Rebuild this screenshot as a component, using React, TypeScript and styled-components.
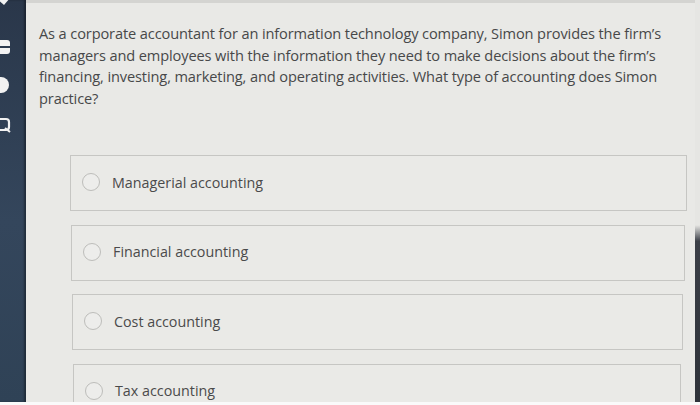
import React from 'react';
import styled, { createGlobalStyle } from 'styled-components';

const GlobalStyle = createGlobalStyle`
  html, body {
    margin: 0;
    padding: 0;
    background: #e8e8e5;
  }
  body {
    font-family: "Open Sans", "Noto Sans", Arial, sans-serif;
  }
`;

const questionLines = [
  'As a corporate accountant for an information technology company, Simon provides the firm’s',
  'managers and employees with the information they need to make decisions about the firm’s',
  'financing, investing, marketing, and operating activities. What type of accounting does Simon',
  'practice?',
];

const options = [
  'Managerial accounting',
  'Financial accounting',
  'Cost accounting',
  'Tax accounting',
];

const App: React.FC = () => {
  return (
    <>
      <GlobalStyle />
      <Screen>
        <Sidebar>
          <SideIcon $top={-6}>
            <svg width="14" height="14" viewBox="0 0 14 14">
              <path d="M-4 2 L10 2 L4 9 Z" fill="#f2f2f2" />
            </svg>
          </SideIcon>
          <SideIcon $top={26}>
            <svg width="14" height="18" viewBox="0 0 14 18">
              <rect x="-6" y="2" width="16" height="14" rx="3" fill="#f2f2f2" />
              <rect x="-6" y="8" width="16" height="2" fill="#2c3b4f" />
            </svg>
          </SideIcon>
          <SideIcon $top={20}>
            <svg width="14" height="18" viewBox="0 0 14 18">
              <circle cx="1" cy="9" r="8" fill="#f2f2f2" />
            </svg>
          </SideIcon>
          <SideIcon $top={22}>
            <svg width="14" height="16" viewBox="0 0 14 16">
              <path d="M-4 2 L6 2 Q9 2 9 5 L9 10 Q9 13 6 13 L2 13 L-4 13" fill="none" stroke="#f2f2f2" strokeWidth="2.2" />
              <path d="M5 11 L10 15" stroke="#f2f2f2" strokeWidth="2" />
            </svg>
          </SideIcon>
        </Sidebar>
        <Main>
          <Question>
            {questionLines.map(line => (
              <QuestionLine key={line}>{line}</QuestionLine>
            ))}
          </Question>
          <OptionList>
            {options.map((label, i) => (
              <Option key={label} $shift={i}>
                <Radio />
                <OptionLabel>{label}</OptionLabel>
              </Option>
            ))}
          </OptionList>
        </Main>
        <RightEdge />
      </Screen>
      <BottomStrip />
    </>
  );
};

export default App;

// Styled Components
const Screen = styled.div`
  display: flex;
  width: 700px;
  height: 402px;
  overflow: hidden;
  background: #e8e8e5;
`;

const Sidebar = styled.div`
  width: 26px;
  flex-shrink: 0;
  background: linear-gradient(to bottom, #2a374a 0%, #34465c 55%, #2f4256 100%);
  display: flex;
  flex-direction: column;
  align-items: flex-start;
  overflow: hidden;
  box-shadow: inset -2px 0 2px rgba(0, 0, 0, 0.35);
`;

const SideIcon = styled.div<{ $top: number }>`
  margin-top: ${p => p.$top}px;
  height: 18px;
  display: flex;
  align-items: center;
`;

const Main = styled.div`
  flex: 1;
  padding: 20px 0 0 13px;
  border-top: 3px solid #d4d4d1;
  background: #e9e9e6;
`;

const Question = styled.div`
  font-size: 14.6px;
  line-height: 21.5px;
  letter-spacing: -0.12px;
  color: #474849;
`;

const QuestionLine = styled.div`
  white-space: nowrap;
`;

const OptionList = styled.div`
  display: flex;
  flex-direction: column;
  gap: 13.5px;
  margin-top: 46px;
  margin-left: 31px;
`;

const Option = styled.div<{ $shift: number }>`
  display: flex;
  align-items: center;
  box-sizing: border-box;
  height: 56px;
  width: ${p => 617 - p.$shift * 3}px;
  margin-left: ${p => p.$shift}px;
  padding: 0 0 2px 11px;
  border: 1px solid #c6c6c3;
  background: #eaeae7;
`;

const Radio = styled.span`
  width: 18px;
  height: 18px;
  box-sizing: border-box;
  border-radius: 50%;
  border: 1.5px solid #bdbdba;
  background: #ededeb;
  flex-shrink: 0;
`;

const OptionLabel = styled.span`
  margin-left: 12px;
  font-size: 14.3px;
  color: #4a4a4b;
`;

const RightEdge = styled.div`
  width: 5px;
  flex-shrink: 0;
  background: linear-gradient(to bottom, #e6e6e3 0%, #e6e6e3 56%, #3b3f47 60%, #2f333a 100%);
`;

const BottomStrip = styled.div`
  width: 700px;
  height: 3px;
  background: #fafafa;
`;
